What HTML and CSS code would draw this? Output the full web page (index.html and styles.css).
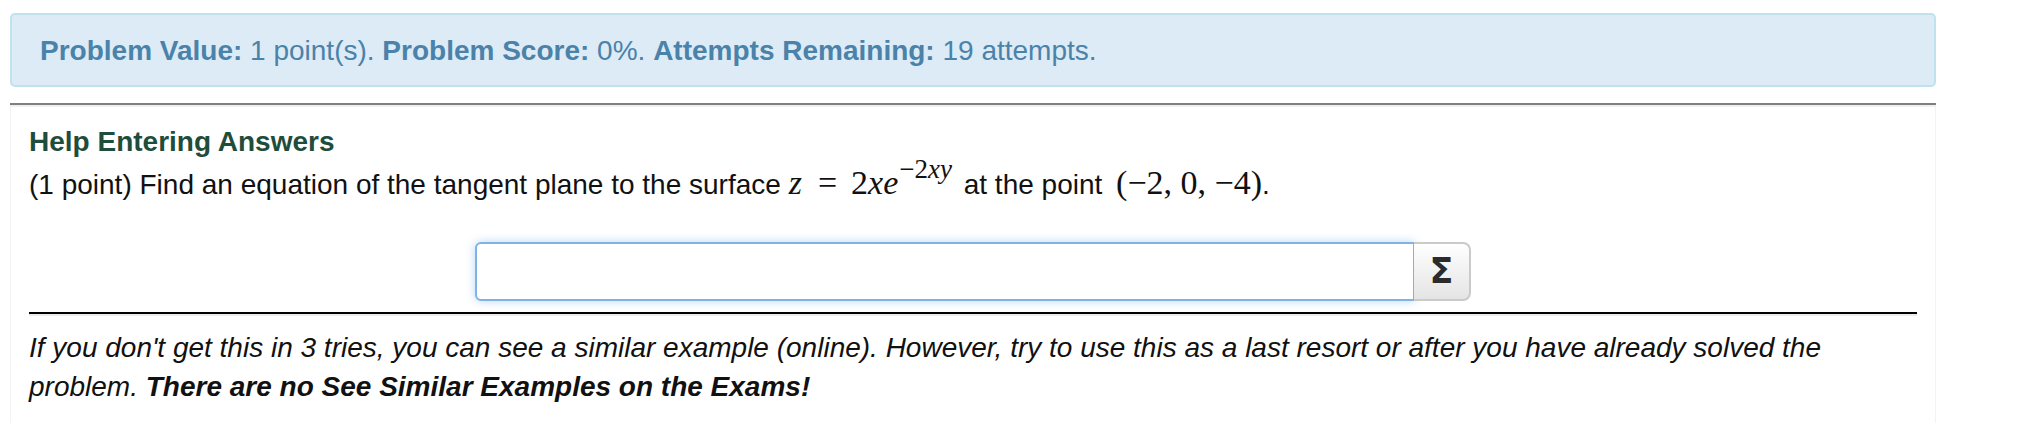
FILE: index.html
```html
<!DOCTYPE html>
<html lang="en">
<head>
<meta charset="utf-8">
<title>Problem</title>
<link rel="stylesheet" href="styles.css">
</head>
<body>
<div class="page">
  <div class="alert">
    <b>Problem Value:</b> 1 point(s). <b>Problem Score:</b> 0%. <b>Attempts Remaining:</b> 19 attempts.
  </div>
  <div class="rule-gray"></div>
  <div class="problem">
    <div class="help"><a href="#">Help Entering Answers</a></div>
    <p class="statement">(1 point) Find an equation of the tangent plane to the surface <span class="math"><i>z</i><span class="op">=</span>2<i>x</i><i>e</i><sup class="sup">&minus;2<i>x</i><i>y</i></sup></span> at the point <span class="math tuple">(&minus;2, 0, &minus;4)</span>.</p>
    <div class="answer-row">
      <input class="answer" type="text" aria-label="answer">
      <button class="sigma" type="button">&Sigma;</button>
    </div>
    <div class="rule-black"></div>
    <p class="note"><span>If you don't get this in 3 tries, you can see a similar example (online). However, try to use this as a last resort or after you have already solved the</span> <span>problem.</span> <b>There are no See Similar Examples on the Exams!</b></p>
  </div>
</div>
</body>
</html>
```
FILE: styles.css
```css
html, body {
  margin: 0;
  padding: 0;
  background: #ffffff;
}

body {
  font-family: "Liberation Sans", Arial, Helvetica, sans-serif;
  font-size: 28px;
  line-height: 39px;
  color: #111111;
}

.page {
  width: 1926px;
  padding: 13px 0 0 10px;
}

.alert {
  height: 39px;
  padding: 16px 28px 15px 28px;
  background: #dcebf6;
  border: 2px solid #c0e2ec;
  border-radius: 5px;
  color: #4a82aa;
  white-space: nowrap;
}

.alert b {
  font-weight: bold;
}

.rule-gray {
  margin-top: 16px;
  height: 0;
  border-top: 2px solid #7f7f7f;
  border-bottom: 2px solid #f0f0f0;
}

.problem {
  border-left: 1px solid #f3f3f3;
  border-right: 1px solid #f3f3f3;
  padding: 15px 18px 17px 18px;
}

.help {
  font-weight: bold;
}

.help a {
  color: #1f4d3c;
  text-decoration: none;
}

.statement {
  margin: 4px 0 0 0;
  color: #111111;
  white-space: nowrap;
}

.math {
  font-family: "Liberation Serif", "Times New Roman", serif;
  font-size: 34px;
  line-height: 0;
}

.math i {
  font-style: italic;
}

.tuple {
  margin-left: 6px;
}

.op {
  margin: 0 14px 0 16px;
}

.sup {
  font-size: 27px;
  line-height: 0;
  vertical-align: 0;
  position: relative;
  top: -16px;
  margin-left: 1px;
  margin-right: 4px;
}

.answer-row {
  display: flex;
  justify-content: center;
  margin-top: 38px;
}

.answer {
  box-sizing: border-box;
  width: 940px;
  height: 59px;
  margin: 0;
  border: 2px solid #7fb3e6;
  border-radius: 6px 0 0 6px;
  background: #ffffff;
  box-shadow: 0 0 10px rgba(102, 166, 233, 0.45);
  outline: none;
  font-size: 27px;
}

.sigma {
  box-sizing: border-box;
  width: 57px;
  height: 59px;
  margin: 0 0 0 -1px;
  padding: 0;
  border: 2px solid #cacaca;
  border-left: none;
  border-radius: 0 8px 8px 0;
  background: linear-gradient(#ffffff, #e4e4e4);
  color: #2b2b2b;
  font-family: "DejaVu Sans", "Liberation Sans", sans-serif;
  font-weight: bold;
  font-size: 35px;
  line-height: 1;
}

.rule-black {
  margin-top: 11px;
  height: 0;
  border-top: 2px solid #000000;
  border-bottom: 2px solid #ececec;
}

.note {
  width: 1830px;
  margin: 12px 0 0 0;
  font-style: italic;
  color: #111111;
}

.note b {
  font-weight: bold;
}
```
